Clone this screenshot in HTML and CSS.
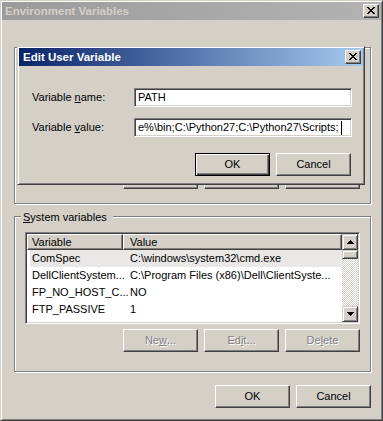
FILE: index.html
```html
<!DOCTYPE html>
<html>
<head>
<meta charset="utf-8">
<title>Environment Variables</title>
<link rel="stylesheet" href="styles.css">
</head>
<body>
<div class="win">
  <div class="titlebar inactive">
    <span class="title">Environment Variables</span>
    <span class="closebtn"><svg viewBox="0 0 8 7" width="8" height="7" shape-rendering="crispEdges"><path d="M0 0h2v1H0zM6 0h2v1H6zM1 1h2v1H1zM5 1h2v1H5zM2 2h4v1H2zM3 3h2v1H3zM2 4h4v1H2zM1 5h2v1H1zM5 5h2v1H5zM0 6h2v1H0zM6 6h2v1H6z" fill="#000"/></svg></span>
  </div>

  <div class="group user">
    <div class="legend"><u>U</u>ser variables for user</div>
    <div class="list tall">
      <div class="lv">
        <div class="hdr"><div class="hcell h1">Variable</div><div class="hcell h2">Value</div></div>
      </div>
      <div class="sb">
        <div class="sbbtn"></div>
        <div class="track"></div>
        <div class="sbbtn"></div>
      </div>
    </div>
    <div class="btnrow">
      <span class="btn">Ne<u>w</u>...</span>
      <span class="btn">Ed<u>i</u>t...</span>
      <span class="btn">Delete</span>
    </div>
  </div>

  <div class="group sys">
    <div class="legend"><u>S</u>ystem variables</div>
    <div class="list">
      <div class="lv">
        <div class="hdr"><div class="hcell h1">Variable</div><div class="hcell h2">Value</div></div>
        <div class="row sel"><span class="c1">ComSpec</span><span class="c2">C:\windows\system32\cmd.exe</span></div>
        <div class="row"><span class="c1">DellClientSystem...</span><span class="c2">C:\Program Files (x86)\Dell\ClientSyste...</span></div>
        <div class="row"><span class="c1">FP_NO_HOST_C...</span><span class="c2">NO</span></div>
        <div class="row"><span class="c1">FTP_PASSIVE</span><span class="c2">1</span></div>
        <div class="row"><span class="c1">JAVA_HOME</span><span class="c2">C:\Java\jdk1.7.0</span></div>
      </div>
      <div class="sb">
        <div class="sbbtn"><svg viewBox="0 0 7 4" width="7" height="4" shape-rendering="crispEdges"><path d="M3 0h1v1H3zM2 1h3v1H2zM1 2h5v1H1zM0 3h7v1H0z" fill="#000"/></svg></div>
        <div class="thumb"></div>
        <div class="track"></div>
        <div class="sbbtn"><svg viewBox="0 0 7 4" width="7" height="4" shape-rendering="crispEdges"><path d="M0 0h7v1H0zM1 1h5v1H1zM2 2h3v1H2zM3 3h1v1H3z" fill="#000"/></svg></div>
      </div>
    </div>
    <div class="btnrow">
      <span class="btn dis">Ne<u>w</u>...</span>
      <span class="btn dis">Ed<u>i</u>t...</span>
      <span class="btn dis">De<u>l</u>ete</span>
    </div>
  </div>

  <div class="btnrow main">
    <span class="btn">OK</span>
    <span class="btn">Cancel</span>
  </div>

  <div class="dialog">
    <div class="titlebar active">
      <span class="title">Edit User Variable</span>
      <span class="closebtn"><svg viewBox="0 0 8 7" width="8" height="7" shape-rendering="crispEdges"><path d="M0 0h2v1H0zM6 0h2v1H6zM1 1h2v1H1zM5 1h2v1H5zM2 2h4v1H2zM3 3h2v1H3zM2 4h4v1H2zM1 5h2v1H1zM5 5h2v1H5zM0 6h2v1H0zM6 6h2v1H6z" fill="#000"/></svg></span>
    </div>
    <div class="dlgbody">
      <div class="field">
        <span class="lbl">Variable <u>n</u>ame:</span>
        <div class="edit">PATH</div>
      </div>
      <div class="field">
        <span class="lbl">Variable <u>v</u>alue:</span>
        <div class="edit">e%\bin;C:\Python27;C:\Python27\Scripts;<span class="caret"></span></div>
      </div>
      <div class="btnrow dlg">
        <span class="btn def">OK</span>
        <span class="btn">Cancel</span>
      </div>
    </div>
  </div>
</div>
</body>
</html>
```

FILE: styles.css
```css
* { box-sizing: border-box; }
html, body { margin: 0; padding: 0; }
body {
  width: 383px;
  height: 421px;
  overflow: hidden;
  background: #d4d0c8;
  font: 11px/13px "Liberation Sans", Arial, sans-serif;
  color: #000;
}
u { text-decoration: underline; text-underline-offset: 1px; }

.win {
  position: relative;
  width: 383px;
  height: 421px;
  background: #d4d0c8;
  border: 1px solid;
  border-color: #d4d0c8 #404040 #404040 #d4d0c8;
  box-shadow: inset 1px 1px #fff, inset -1px -1px #808080;
  padding: 1px;
  display: flex;
  flex-direction: column;
}

.titlebar {
  height: 18px;
  flex: none;
  display: flex;
  align-items: center;
  justify-content: space-between;
  padding: 0 2px 0 3px;
}
.titlebar.inactive {
  background: linear-gradient(to right, #9b9b9b, #b3b3b3);
  color: #d4d0c8;
}
.titlebar.active {
  background: linear-gradient(to right, #0a246a, #a6caf0);
  color: #fff;
  padding-left: 4px;
}
.title {
  font-weight: bold;
  font-size: 11.5px;
  line-height: 18px;
  white-space: nowrap;
}
.closebtn {
  width: 16px;
  height: 14px;
  flex: none;
  background: #d4d0c8;
  border: 1px solid;
  border-color: #fff #404040 #404040 #fff;
  box-shadow: inset -1px -1px #808080;
  padding: 2px 0 0 3px;
}
.closebtn svg { display: block; }

.group {
  flex: none;
  margin: 27px 10px 0 12px;
  border: 1px solid #808080;
  box-shadow: inset 1px 1px #fff, 1px 1px #fff;
  padding: 0 10px 14px 10px;
  display: flex;
  flex-direction: column;
}
.group.sys {
  margin-top: 12px;
  padding-bottom: 19px;
}
.legend {
  align-self: flex-start;
  margin: -6px 0 0 -4px;
  padding: 0 6px 0 2px;
  background: #d4d0c8;
  line-height: 13px;
  white-space: nowrap;
}
.group.user .legend {
  margin-top: -4px;
  margin-bottom: -2px;
}

.list {
  margin-top: 8px;
  height: 92px;
  background: #fff;
  border: 1px solid;
  border-color: #808080 #fff #fff #808080;
  box-shadow: inset 1px 1px #404040, inset -1px -1px #d4d0c8;
  padding: 1px;
  display: flex;
}
.list.tall { height: 98px; }
.lv {
  flex: 1;
  min-width: 0;
  display: flex;
  flex-direction: column;
  overflow: hidden;
}
.hdr {
  display: flex;
  height: 16px;
  flex: none;
}
.hcell {
  background: #d4d0c8;
  border: 1px solid;
  border-color: #fff #404040 #404040 #fff;
  box-shadow: inset -1px -1px #808080;
  line-height: 14px;
  white-space: nowrap;
}
.h1 { width: 96px; padding-left: 4px; }
.h2 { flex: 1; padding-left: 6px; }

.row {
  display: flex;
  height: 17px;
  flex: none;
  margin-left: 3px;
  align-items: center;
  white-space: nowrap;
}
.row.sel { background: #e9e8e6; }
.c1 {
  width: 93px;
  flex: none;
  padding: 0 0 0 2px;
}
.c2 {
  flex: 1;
  min-width: 0;
  padding: 0 4px 0 7px;
}

.sb {
  width: 16px;
  flex: none;
  display: flex;
  flex-direction: column;
}
.sbbtn, .thumb {
  background: #d4d0c8;
  border: 1px solid;
  border-color: #d4d0c8 #404040 #404040 #d4d0c8;
  box-shadow: inset 1px 1px #fff, inset -1px -1px #808080;
  flex: none;
}
.sbbtn {
  height: 16px;
  display: flex;
  align-items: center;
  justify-content: center;
}
.sbbtn svg { display: block; }
.thumb { height: 9px; }
.track {
  flex: 1;
  background: repeating-conic-gradient(#fff 0 25%, #d4d0c8 0 50%) 0 0 / 2px 2px;
}

.btnrow {
  display: flex;
  justify-content: flex-end;
  gap: 6px;
  margin-top: 5px;
  flex: none;
}
.btnrow.main {
  margin: 13px 10px 0 0;
}
.btnrow.dlg {
  margin-right: 1px;
}
.btn {
  width: 75px;
  height: 23px;
  flex: none;
  display: flex;
  align-items: center;
  justify-content: center;
  background: #d4d0c8;
  border: 1px solid;
  border-color: #fff #404040 #404040 #fff;
  box-shadow: inset -1px -1px #808080;
  white-space: nowrap;
}
.btn.def {
  border-color: #000;
  box-shadow: inset 1px 1px #fff, inset -1px -1px #404040, inset -2px -2px #808080;
}
.btn.dis {
  color: #808080;
  text-shadow: 1px 1px #fff;
}

.dialog {
  position: absolute;
  left: 16px;
  top: 45px;
  width: 348px;
  height: 139px;
  background: #d4d0c8;
  border: 1px solid;
  border-color: #d4d0c8 #404040 #404040 #d4d0c8;
  box-shadow: inset 1px 1px #fff, inset -1px -1px #808080;
  padding: 1px;
  display: flex;
  flex-direction: column;
}
.dlgbody {
  padding: 22px 11px 0 13px;
  display: flex;
  flex-direction: column;
  gap: 11px;
}
.field {
  display: flex;
  align-items: center;
}
.lbl {
  width: 102px;
  flex: none;
  white-space: nowrap;
}
.edit {
  width: 218px;
  height: 19px;
  flex: none;
  background: #fff;
  border: 1px solid;
  border-color: #808080 #fff #fff #808080;
  box-shadow: inset 1px 1px #404040, inset -1px -1px #d4d0c8;
  padding: 0 0 0 3px;
  display: flex;
  align-items: center;
  white-space: nowrap;
  overflow: hidden;
}
.caret {
  width: 1px;
  height: 14px;
  background: #000;
  margin-left: 2px;
  flex: none;
}
```
